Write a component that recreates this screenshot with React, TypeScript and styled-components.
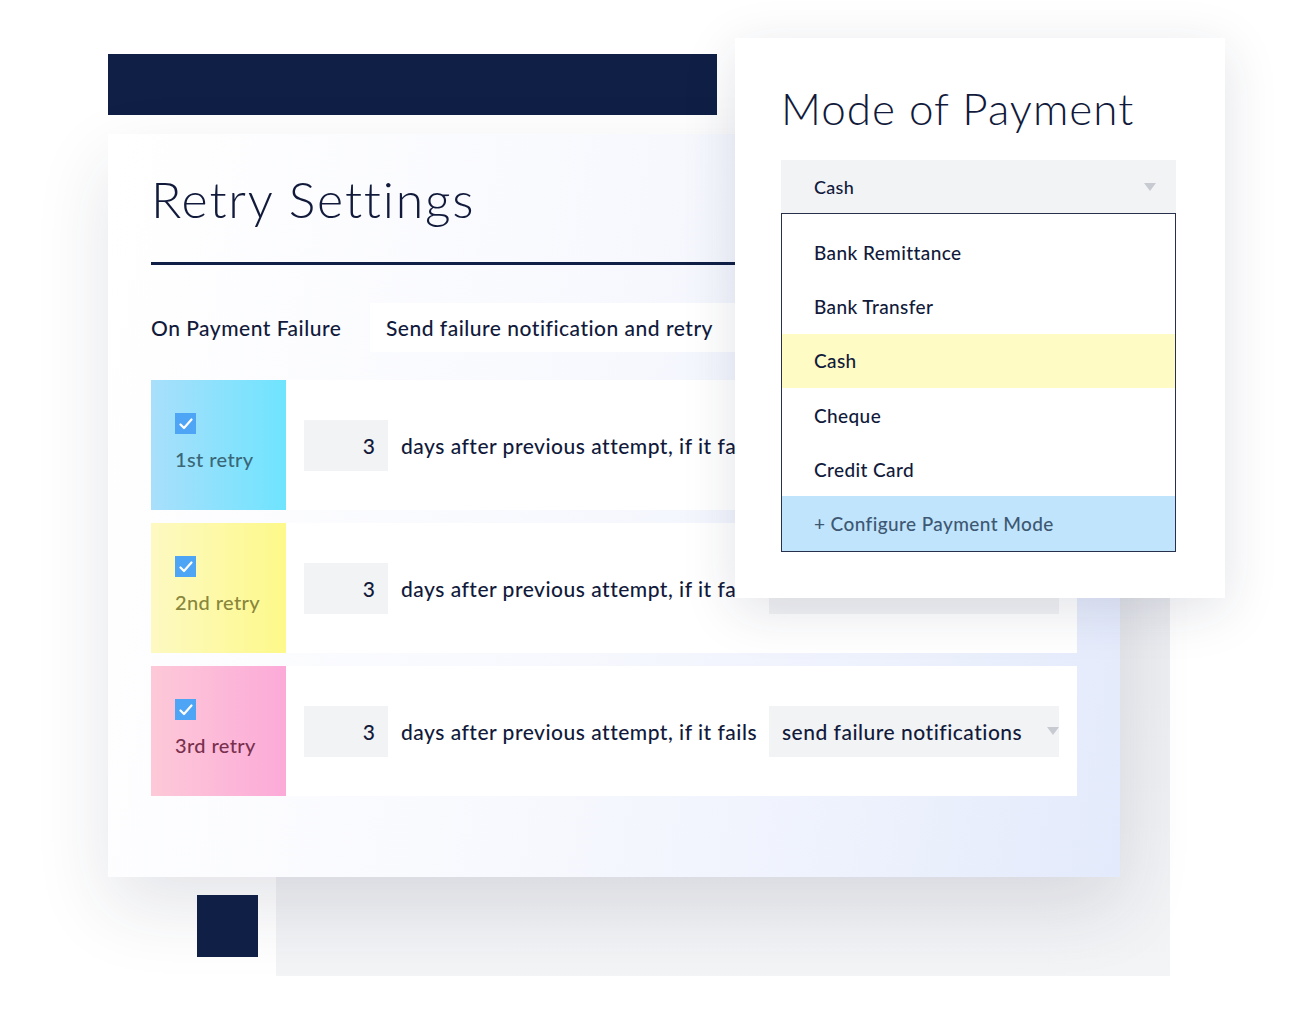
import styled, { createGlobalStyle } from "styled-components";

const GlobalStyle = createGlobalStyle`
  html, body {
    margin: 0;
    padding: 0;
    background: #ffffff;
  }
  body {
    font-family: "Lato", "Noto Sans", sans-serif;
    color: #111a3b;
  }
`;

const navy = "#0f1f45";
const ink = "#111a3b";
const fieldGrey = "#f2f3f5";

const Canvas = styled.div`
  position: relative;
  width: 1300px;
  height: 1021px;
  overflow: hidden;
  background: #ffffff;
`;

/* background decorations of the illustration */
const BackSheet = styled.div`
  position: absolute;
  left: 276px;
  top: 300px;
  width: 894px;
  height: 676px;
  background: linear-gradient(180deg, #e9eaee 0%, #eeeff2 70%, #f3f4f6 100%);
`;

const TopBar = styled.div`
  position: absolute;
  left: 108px;
  top: 54px;
  width: 609px;
  height: 61px;
  background: ${navy};
`;

const NavySquare = styled.div`
  position: absolute;
  left: 197px;
  top: 895px;
  width: 61px;
  height: 62px;
  background: ${navy};
`;

/* Retry settings card */
const Card = styled.section`
  position: absolute;
  left: 108px;
  top: 134px;
  width: 1012px;
  height: 743px;
  box-sizing: border-box;
  padding: 40px 43px 0;
  background: linear-gradient(100deg, #ffffff 0%, #f8f9fe 45%, #eef2fd 75%, #e3eafb 100%);
  box-shadow: 0 30px 70px rgba(30, 40, 70, 0.12);
`;

const Title = styled.h1`
  margin: 0;
  font-size: 50px;
  line-height: 50px;
  font-weight: 300;
  color: ${ink};
  letter-spacing: 1.8px;
`;

const Rule = styled.div`
  margin-top: 38px;
  height: 3px;
  background: ${navy};
`;

const FailureRow = styled.div`
  margin-top: 38px;
  display: flex;
  align-items: center;
  height: 49px;
`;

const FieldLabel = styled.div`
  width: 219px;
  font-size: 21px;
  font-weight: 500;
  letter-spacing: 0.5px;
  color: ${ink};
`;

const PlainField = styled.div`
  display: flex;
  align-items: center;
  height: 100%;
  width: 420px;
  padding: 0 16px;
  box-sizing: border-box;
  background: #ffffff;
  font-size: 21px;
  font-weight: 500;
  letter-spacing: 0.5px;
  white-space: nowrap;
`;

const RetryList = styled.div`
  margin-top: 28px;
  display: flex;
  flex-direction: column;
  gap: 13px;
`;

const RetryRow = styled.div`
  display: flex;
  height: 130px;
  background: #ffffff;
`;

const tones = {
  blue: { bg: "linear-gradient(90deg, #a9dffb 0%, #6fe4fe 100%)", text: "#3a6778" },
  yellow: { bg: "linear-gradient(90deg, #fdf9c2 0%, #fdf98a 100%)", text: "#88863c" },
  pink: { bg: "linear-gradient(90deg, #fdc9d8 0%, #fcaad8 100%)", text: "#79304e" },
};

type Tone = keyof typeof tones;

const RetryTag = styled.div<{ $tone: Tone }>`
  width: 135px;
  flex-shrink: 0;
  box-sizing: border-box;
  padding: 33px 0 0 24px;
  background: ${(p) => tones[p.$tone].bg};
  color: ${(p) => tones[p.$tone].text};
  font-size: 20px;
  font-weight: 500;
  letter-spacing: 0.4px;
`;

const Check = styled.div`
  width: 21px;
  height: 21px;
  background: #4ea4f5;
  display: flex;
  align-items: center;
  justify-content: center;
  margin-bottom: 13px;
`;

const RetryBody = styled.div`
  flex: 1;
  display: flex;
  align-items: center;
  padding: 0 18px;
`;

const DaysBox = styled.div`
  width: 84px;
  height: 51px;
  box-sizing: border-box;
  padding-right: 13px;
  background: ${fieldGrey};
  display: flex;
  align-items: center;
  justify-content: flex-end;
  font-size: 21px;
  font-weight: 500;
`;

const DaysText = styled.div`
  margin-left: 13px;
  font-size: 21px;
  font-weight: 500;
  letter-spacing: 0.5px;
  white-space: nowrap;
`;

const SelectBox = styled.div<{ $width: number; $pad: number }>`
  width: ${(p) => p.$width}px;
  height: 51px;
  box-sizing: border-box;
  padding: 0 ${(p) => p.$pad - 13}px 0 ${(p) => p.$pad}px;
  background: ${fieldGrey};
  display: flex;
  align-items: center;
  justify-content: space-between;
  font-size: 21px;
  font-weight: 500;
  letter-spacing: 0.5px;
  white-space: nowrap;
`;

const RowSelect = styled(SelectBox)`
  margin-left: auto;
`;

/* Mode of payment popup */
const Popup = styled.section`
  position: absolute;
  left: 735px;
  top: 38px;
  width: 490px;
  height: 560px;
  box-sizing: border-box;
  padding: 48px 46px 0;
  background: #ffffff;
  box-shadow: 0 12px 50px rgba(30, 40, 80, 0.13);
`;

const PopupTitle = styled.h2`
  margin: 0;
  font-size: 44px;
  line-height: 44px;
  font-weight: 300;
  letter-spacing: 1px;
  color: ${ink};
`;

const PopupSelect = styled(SelectBox)`
  margin-top: 30px;
  height: 53px;
  font-size: 18px;
  letter-spacing: 0.3px;
`;

const OptionList = styled.div`
  width: 395px;
  box-sizing: border-box;
  border: 1px solid #27314d;
  padding-top: 11px;
  background: #ffffff;
`;

const Option = styled.div<{ $variant?: "active" | "action" }>`
  height: 54.3px;
  display: flex;
  align-items: center;
  padding-left: 32px;
  font-size: 19px;
  font-weight: 500;
  letter-spacing: 0.4px;
  background: ${(p) =>
    p.$variant === "active" ? "#fffbc4" : p.$variant === "action" ? "#c1e4fd" : "transparent"};
  color: ${(p) => (p.$variant === "action" ? "#3d5872" : ink)};
`;

const Caret = () => (
  <svg width="12" height="8" viewBox="0 0 12 8">
    <path d="M0 0 H12 L6 8 Z" fill="#c7cad1" />
  </svg>
);

const Tick = () => (
  <svg width="14" height="12" viewBox="0 0 14 12">
    <path d="M1.5 6.5 L5 10 L12.5 1.5" fill="none" stroke="#ffffff" strokeWidth="2.2" strokeLinecap="round" strokeLinejoin="round" />
  </svg>
);

const retries: { label: string; tone: Tone }[] = [
  { label: "1st retry", tone: "blue" },
  { label: "2nd retry", tone: "yellow" },
  { label: "3rd retry", tone: "pink" },
];

const paymentModes = ["Bank Remittance", "Bank Transfer", "Cash", "Cheque", "Credit Card"];

const App = () => {
  return (
    <Canvas>
      <GlobalStyle />
      <BackSheet />
      <TopBar />

      <Card>
        <Title>Retry Settings</Title>
        <Rule />
        <FailureRow>
          <FieldLabel>On Payment Failure</FieldLabel>
          <PlainField>Send failure notification and retry</PlainField>
        </FailureRow>

        <RetryList>
          {retries.map((r) => (
            <RetryRow key={r.label}>
              <RetryTag $tone={r.tone}>
                <Check>
                  <Tick />
                </Check>
                {r.label}
              </RetryTag>
              <RetryBody>
                <DaysBox>3</DaysBox>
                <DaysText>days after previous attempt, if it fails</DaysText>
                <RowSelect $width={290} $pad={13}>
                  send failure notifications
                  <Caret />
                </RowSelect>
              </RetryBody>
            </RetryRow>
          ))}
        </RetryList>
      </Card>

      <NavySquare />

      <Popup>
        <PopupTitle>Mode of Payment</PopupTitle>
        <PopupSelect $width={395} $pad={33}>
          Cash
          <Caret />
        </PopupSelect>
        <OptionList>
          {paymentModes.map((m) => (
            <Option key={m} $variant={m === "Cash" ? "active" : undefined}>
              {m}
            </Option>
          ))}
          <Option $variant="action">+ Configure Payment Mode</Option>
        </OptionList>
      </Popup>
    </Canvas>
  );
};

export default App;
